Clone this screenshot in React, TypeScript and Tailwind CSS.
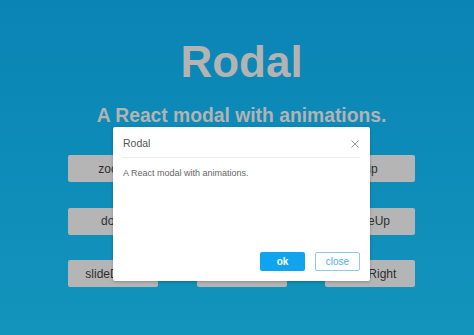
import React from "react";

const rows = [
  ["zoom", "fade", "flip"],
  ["door", "rotate", "slideUp"],
  ["slideDown", "slideLeft", "slideRight"],
];

export default function App() {
  return (
    <div
      className="relative w-[474px] h-[335px] overflow-hidden bg-gradient-to-b from-[#0a84b5] to-[#1294bc]"
      style={{ fontFamily: '"Liberation Sans", Arial, sans-serif' }}
    >
      <div className="flex flex-col items-center pl-[9px] pt-[40px]">
        <h1 className="text-[44px] leading-[44px] font-bold text-[#b3b3b3]">Rodal</h1>
        <h2 className="mt-[22px] text-[19.3px] leading-[19px] font-bold text-[#b3b3b3]">
          A React modal with animations.
        </h2>
        <div className="mt-[30px] grid grid-cols-[90px_90px_90px] gap-x-[38.5px] gap-y-[25.5px]">
          {rows.flat().map((label) => (
            <button
              key={label}
              className="h-[27px] rounded-[2px] bg-[#b5b5b5] text-[12px] text-[#2e2e2e] flex items-center justify-center"
            >
              {label}
            </button>
          ))}
        </div>
      </div>

      <div className="absolute left-[113px] top-[127px] w-[257px] h-[154px] bg-white rounded-[2px] shadow-[0_1px_3px_rgba(0,0,0,0.25)] flex flex-col">
        <div className="mx-[10px] pt-[9px] pb-[6px] border-b border-[#ebebeb]">
          <div className="text-[10.5px] leading-[15px] text-[#555555]">Rodal</div>
        </div>
        <svg
          className="absolute top-[12.5px] right-[11.5px]"
          width="8"
          height="8"
          viewBox="0 0 8 8"
        >
          <path d="M0.5 0.5 L7.5 7.5 M7.5 0.5 L0.5 7.5" stroke="#9a9a9a" strokeWidth="1" fill="none" />
        </svg>
        <div className="flex-1 px-[10px] pt-[9px] text-[9px] leading-[13.5px] text-[#666666]">
          A React modal with animations.
        </div>
        <div className="flex justify-end gap-[10px] px-[10px] pb-[10px]">
          <button className="w-[45px] h-[19px] rounded-[2px] bg-[#10a4ef] text-white text-[10px] font-bold flex items-center justify-center">
            ok
          </button>
          <button className="w-[45px] h-[19px] rounded-[2px] border border-[#8fcbe6] bg-white text-[#4eb1de] text-[10px] flex items-center justify-center">
            close
          </button>
        </div>
      </div>
    </div>
  );
}
